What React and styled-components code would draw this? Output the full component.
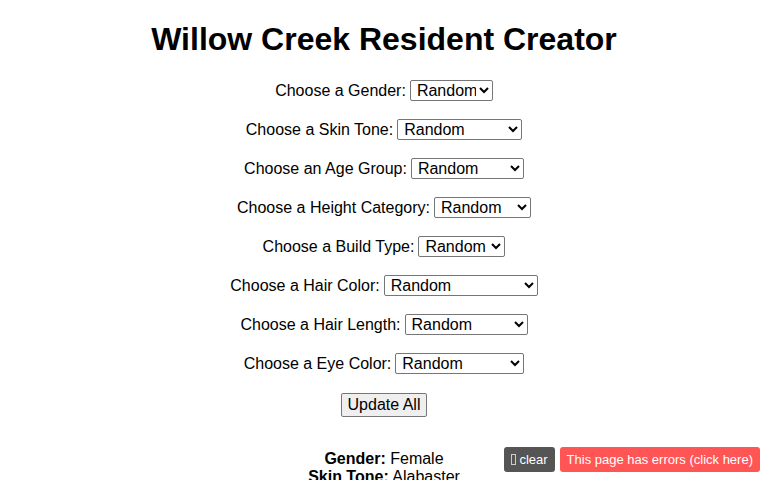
import React, { useState } from "react";
import styled, { createGlobalStyle } from "styled-components";

const traits = [
  { label: "Choose a Gender:", width: 83 },
  { label: "Choose a Skin Tone:", width: 125 },
  { label: "Choose an Age Group:", width: 113 },
  { label: "Choose a Height Category:", width: 97 },
  { label: "Choose a Build Type:", width: 87 },
  { label: "Choose a Hair Color:", width: 154 },
  { label: "Choose a Hair Length:", width: 123 },
  { label: "Choose a Eye Color:", width: 129 },
];

function App() {
  const [values, setValues] = useState(traits.map(() => "Random"));

  return (
    <>
      <GlobalStyle />
      <Page>
        <Title>Willow Creek Resident Creator</Title>
        <Form>
          {traits.map((t, i) => (
            <Row key={t.label}>
              <label>{t.label}</label>
              <Select
                $width={t.width}
                value={values[i]}
                onChange={(e) => {
                  const next = [...values];
                  next[i] = e.target.value;
                  setValues(next);
                }}
              >
                <option>Random</option>
              </Select>
            </Row>
          ))}
          <UpdateButton>Update All</UpdateButton>
        </Form>
        <Result>
          <div>
            <b>Gender:</b> Female
          </div>
          <div>
            <b>Skin Tone:</b> Alabaster
          </div>
        </Result>
      </Page>
      <ErrorBar>
        <ClearButton>
          <Tofu /> clear
        </ClearButton>
        <ErrorBadge>This page has errors (click here)</ErrorBadge>
      </ErrorBar>
    </>
  );
}

export default App;

const GlobalStyle = createGlobalStyle`
  body {
    margin: 8px;
    font-family: "Liberation Sans", Arial, sans-serif;
    color: #000;
    background: #fff;
  }
`;

const Page = styled.div`
  text-align: center;
`;

const Title = styled.h1`
  font-size: 32px;
  font-weight: 700;
  margin: 13px 0 22px;
`;

const Form = styled.div`
  display: flex;
  flex-direction: column;
  align-items: center;
  gap: 18px;
`;

const Row = styled.div`
  display: flex;
  align-items: center;
  gap: 4px;
  font-size: 16px;
  height: 21px;
`;

const Select = styled.select`
  width: ${(p) => p.$width}px;
  height: 21px;
  font-family: "Liberation Sans", Arial, sans-serif;
  font-size: 16px;
  color: #000;
  background: #fff;
  border: 1px solid #767676;
  border-radius: 2px;
  padding: 0 0 0 2px;
`;

const UpdateButton = styled.button`
  margin-top: 1px;
  height: 24px;
  padding: 1px 6px;
  font-family: "Liberation Sans", Arial, sans-serif;
  font-size: 16px;
  color: #000;
  background: #efefef;
  border: 1px solid #767676;
  border-radius: 2px;
`;

const Result = styled.div`
  margin-top: 33px;
  font-size: 16px;
  line-height: 18px;
`;

const ErrorBar = styled.div`
  position: fixed;
  right: 8px;
  bottom: 8px;
  display: flex;
  gap: 5px;
  font-family: "Liberation Sans", Arial, sans-serif;
  font-size: 13px;
`;

const ClearButton = styled.div`
  display: flex;
  align-items: center;
  gap: 3px;
  height: 25px;
  padding: 0 7px;
  background: #555;
  color: #fff;
  border-radius: 3px;
`;

const Tofu = styled.span`
  display: inline-block;
  width: 3px;
  height: 9px;
  border: 1px solid #ccc;
`;

const ErrorBadge = styled.div`
  display: flex;
  align-items: center;
  height: 25px;
  padding: 0 7px;
  background: #f55;
  color: #fff;
  border-radius: 3px;
`;
